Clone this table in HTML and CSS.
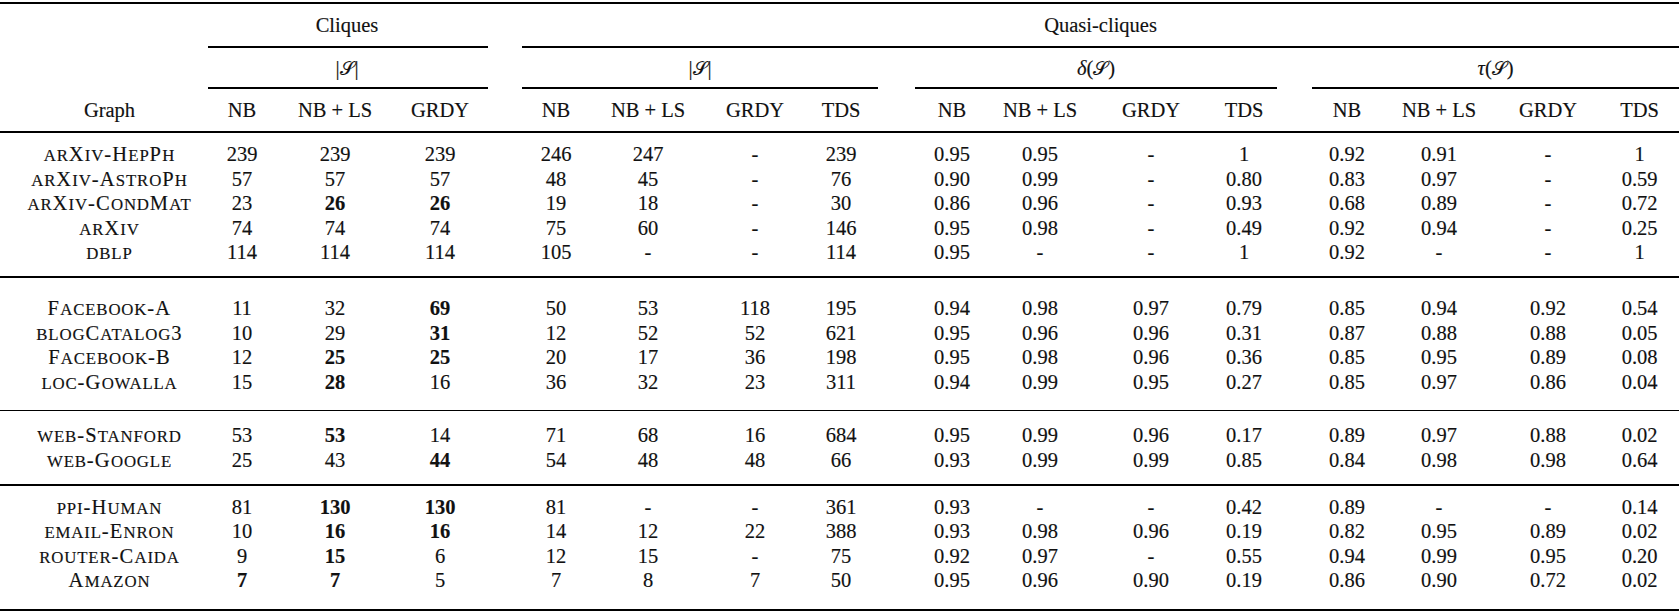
FILE: index.html
```html
<!DOCTYPE html>
<html lang="en">
<head>
<meta charset="utf-8">
<title>Cliques and quasi-cliques results</title>
<link rel="stylesheet" href="styles.css">
</head>
<body>
<table class="res">
  <colgroup>
    <col class="k1"><col class="k2"><col class="k3"><col class="k4"><col class="k5">
    <col class="k6"><col class="k7"><col class="k8"><col class="k9"><col class="k10">
    <col class="k11"><col class="k12"><col class="k13"><col class="k14"><col class="k15">
    <col class="k16"><col class="k17"><col class="k18"><col class="k19">
  </colgroup>
  <thead>
    <tr class="ra">
      <th class="graph" rowspan="3">Graph</th>
      <th class="grp" colspan="3"><div class="lbl">Cliques</div><div class="rule trim"></div></th>
      <th class="sp" rowspan="3"></th>
      <th class="grp" colspan="14"><div class="lbl">Quasi-cliques</div><div class="rule"></div></th>
    </tr>
    <tr class="rb">
      <th class="grp" colspan="3"><div class="lbl">|<span class="cal">𝒮</span>|</div><div class="rule trim"></div></th>
      <th class="grp" colspan="4"><div class="lbl">|<span class="cal">𝒮</span>|</div><div class="rule"></div></th>
      <th class="sp" rowspan="2"></th>
      <th class="grp" colspan="4"><div class="lbl"><i>δ</i>(<span class="cal">𝒮</span>)</div><div class="rule"></div></th>
      <th class="sp" rowspan="2"></th>
      <th class="grp" colspan="4"><div class="lbl"><i>τ</i>(<span class="cal">𝒮</span>)</div><div class="rule"></div></th>
    </tr>
    <tr class="rc">
      <th>NB</th><th>NB + LS</th><th>GRDY</th>
      <th>NB</th><th>NB + LS</th><th>GRDY</th><th>TDS</th>
      <th>NB</th><th>NB + LS</th><th>GRDY</th><th>TDS</th>
      <th>NB</th><th>NB + LS</th><th>GRDY</th><th>TDS</th>
    </tr>
  </thead>
  <tbody class="g1">
    <tr><td class="name"><span class="sc">ar</span>X<span class="sc">iv</span>-H<span class="sc">ep</span>P<span class="sc">h</span></td><td>239</td><td>239</td><td>239</td><td></td><td>246</td><td>247</td><td>-</td><td>239</td><td></td><td>0.95</td><td>0.95</td><td>-</td><td>1</td><td></td><td>0.92</td><td>0.91</td><td>-</td><td>1</td></tr>
    <tr><td class="name"><span class="sc">ar</span>X<span class="sc">iv</span>-A<span class="sc">stro</span>P<span class="sc">h</span></td><td>57</td><td>57</td><td>57</td><td></td><td>48</td><td>45</td><td>-</td><td>76</td><td></td><td>0.90</td><td>0.99</td><td>-</td><td>0.80</td><td></td><td>0.83</td><td>0.97</td><td>-</td><td>0.59</td></tr>
    <tr><td class="name"><span class="sc">ar</span>X<span class="sc">iv</span>-C<span class="sc">ond</span>M<span class="sc">at</span></td><td>23</td><td><b>26</b></td><td><b>26</b></td><td></td><td>19</td><td>18</td><td>-</td><td>30</td><td></td><td>0.86</td><td>0.96</td><td>-</td><td>0.93</td><td></td><td>0.68</td><td>0.89</td><td>-</td><td>0.72</td></tr>
    <tr><td class="name"><span class="sc">ar</span>X<span class="sc">iv</span></td><td>74</td><td>74</td><td>74</td><td></td><td>75</td><td>60</td><td>-</td><td>146</td><td></td><td>0.95</td><td>0.98</td><td>-</td><td>0.49</td><td></td><td>0.92</td><td>0.94</td><td>-</td><td>0.25</td></tr>
    <tr><td class="name"><span class="sc">dblp</span></td><td>114</td><td>114</td><td>114</td><td></td><td>105</td><td>-</td><td>-</td><td>114</td><td></td><td>0.95</td><td>-</td><td>-</td><td>1</td><td></td><td>0.92</td><td>-</td><td>-</td><td>1</td></tr>
  </tbody>
  <tbody class="g2">
    <tr><td class="name">F<span class="sc">acebook</span>-A</td><td>11</td><td>32</td><td><b>69</b></td><td></td><td>50</td><td>53</td><td>118</td><td>195</td><td></td><td>0.94</td><td>0.98</td><td>0.97</td><td>0.79</td><td></td><td>0.85</td><td>0.94</td><td>0.92</td><td>0.54</td></tr>
    <tr><td class="name"><span class="sc">blog</span>C<span class="sc">atalog</span>3</td><td>10</td><td>29</td><td><b>31</b></td><td></td><td>12</td><td>52</td><td>52</td><td>621</td><td></td><td>0.95</td><td>0.96</td><td>0.96</td><td>0.31</td><td></td><td>0.87</td><td>0.88</td><td>0.88</td><td>0.05</td></tr>
    <tr><td class="name">F<span class="sc">acebook</span>-B</td><td>12</td><td><b>25</b></td><td><b>25</b></td><td></td><td>20</td><td>17</td><td>36</td><td>198</td><td></td><td>0.95</td><td>0.98</td><td>0.96</td><td>0.36</td><td></td><td>0.85</td><td>0.95</td><td>0.89</td><td>0.08</td></tr>
    <tr><td class="name"><span class="sc">loc</span>-G<span class="sc">owalla</span></td><td>15</td><td><b>28</b></td><td>16</td><td></td><td>36</td><td>32</td><td>23</td><td>311</td><td></td><td>0.94</td><td>0.99</td><td>0.95</td><td>0.27</td><td></td><td>0.85</td><td>0.97</td><td>0.86</td><td>0.04</td></tr>
  </tbody>
  <tbody class="g3">
    <tr><td class="name"><span class="sc">web</span>-S<span class="sc">tanford</span></td><td>53</td><td><b>53</b></td><td>14</td><td></td><td>71</td><td>68</td><td>16</td><td>684</td><td></td><td>0.95</td><td>0.99</td><td>0.96</td><td>0.17</td><td></td><td>0.89</td><td>0.97</td><td>0.88</td><td>0.02</td></tr>
    <tr><td class="name"><span class="sc">web</span>-G<span class="sc">oogle</span></td><td>25</td><td>43</td><td><b>44</b></td><td></td><td>54</td><td>48</td><td>48</td><td>66</td><td></td><td>0.93</td><td>0.99</td><td>0.99</td><td>0.85</td><td></td><td>0.84</td><td>0.98</td><td>0.98</td><td>0.64</td></tr>
  </tbody>
  <tbody class="g4">
    <tr><td class="name"><span class="sc">ppi</span>-H<span class="sc">uman</span></td><td>81</td><td><b>130</b></td><td><b>130</b></td><td></td><td>81</td><td>-</td><td>-</td><td>361</td><td></td><td>0.93</td><td>-</td><td>-</td><td>0.42</td><td></td><td>0.89</td><td>-</td><td>-</td><td>0.14</td></tr>
    <tr><td class="name"><span class="sc">email</span>-E<span class="sc">nron</span></td><td>10</td><td><b>16</b></td><td><b>16</b></td><td></td><td>14</td><td>12</td><td>22</td><td>388</td><td></td><td>0.93</td><td>0.98</td><td>0.96</td><td>0.19</td><td></td><td>0.82</td><td>0.95</td><td>0.89</td><td>0.02</td></tr>
    <tr><td class="name"><span class="sc">router</span>-C<span class="sc">aida</span></td><td>9</td><td><b>15</b></td><td>6</td><td></td><td>12</td><td>15</td><td>-</td><td>75</td><td></td><td>0.92</td><td>0.97</td><td>-</td><td>0.55</td><td></td><td>0.94</td><td>0.99</td><td>0.95</td><td>0.20</td></tr>
    <tr><td class="name">A<span class="sc">mazon</span></td><td><b>7</b></td><td><b>7</b></td><td>5</td><td></td><td>7</td><td>8</td><td>7</td><td>50</td><td></td><td>0.95</td><td>0.96</td><td>0.90</td><td>0.19</td><td></td><td>0.86</td><td>0.90</td><td>0.72</td><td>0.02</td></tr>
  </tbody>
</table>
</body>
</html>
```
FILE: styles.css
```css
html, body {
  margin: 0;
  padding: 0;
  background: #ffffff;
}

body {
  color: #111111;
  font-family: "Liberation Serif", "DejaVu Serif", serif;
  font-size: 20.5px;
}

.res {
  width: 1679px;
  table-layout: fixed;
  border-collapse: separate;
  border-spacing: 0;
  margin-top: 2px;
  border-top: 2px solid #000;
  border-bottom: 2px solid #000;
}

.res th,
.res td {
  font-family: "Liberation Serif", "DejaVu Serif", serif;
  font-size: 20.5px;
  color: #111111;
  -webkit-text-stroke: 0.15px #111111;
}

.k1 { width: 206px; }
.k2 { width: 72px; }
.k3 { width: 114px; }
.k4 { width: 96px; }
.k5 { width: 34px; }
.k6 { width: 68px; }
.k7 { width: 116px; }
.k8 { width: 98px; }
.k9 { width: 74px; }
.k10 { width: 37px; }
.k11 { width: 74px; }
.k12 { width: 102px; }
.k13 { width: 120px; }
.k14 { width: 66px; }
.k15 { width: 35px; }
.k16 { width: 70px; }
.k17 { width: 114px; }
.k18 { width: 104px; }
.k19 { width: 79px; }

th {
  font-weight: normal;
  padding: 0;
  text-align: center;
  line-height: 25px;
  white-space: nowrap;
}

td {
  padding: 0;
  text-align: center;
  height: 24.6px;
  line-height: 24.6px;
  white-space: nowrap;
}

th.grp {
  vertical-align: top;
}

.lbl {
  height: 25px;
}

.rule {
  border-top: 2px solid #000;
}

.rule.trim {
  margin-left: 2px;
}

.ra th.grp {
  padding-top: 9px;
}

.ra .rule {
  margin-top: 8px;
}

.rb th.grp {
  padding-top: 8px;
}

.rb .rule {
  margin-top: 6px;
}

.rc th {
  padding: 9px 0 8px;
  border-bottom: 2px solid #000;
}

th.graph,
th.sp {
  vertical-align: bottom;
  padding-bottom: 8px;
  border-bottom: 2px solid #000;
}

th.graph,
td.name {
  padding-left: 13px;
}

.cal {
  font-size: 0.95em;
  line-height: 1;
}

b {
  font-weight: bold;
}

td.name {
  letter-spacing: 0.06em;
}

.sc {
  text-transform: uppercase;
  font-size: 0.82em;
  line-height: 1;
  letter-spacing: 0.05em;
}

.g1 tr:first-child td { padding-top: 9px; }
.g1 tr:last-child td { padding-bottom: 11px; }

.g2 tr:first-child td { padding-top: 18px; border-top: 2px solid #000; }
.g2 tr:last-child td { padding-bottom: 16px; }

.g3 tr:first-child td { padding-top: 12px; border-top: 1px solid #000; }
.g3 tr:last-child td { padding-bottom: 11px; }

.g4 tr:first-child td { padding-top: 9px; border-top: 2px solid #000; }
.g4 tr:last-child td { padding-bottom: 16px; }
```
